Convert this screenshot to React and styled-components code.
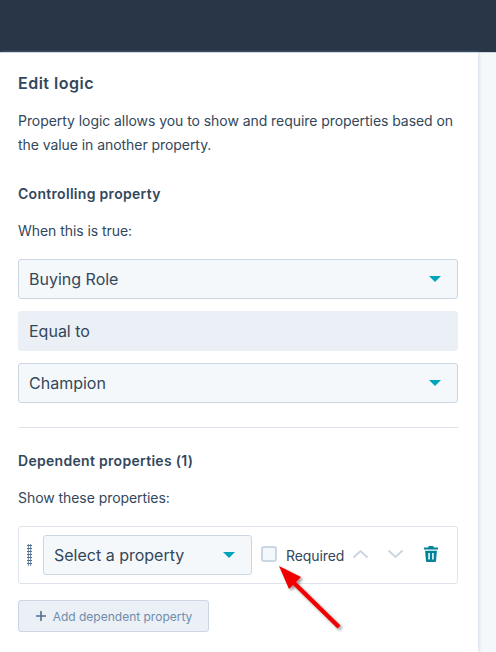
import React from "react";
import styled, { createGlobalStyle } from "styled-components";

const Global = createGlobalStyle`
  html, body { margin: 0; padding: 0; height: 652px; overflow: hidden; background: #f5f8fa; }
  body { font-family: "Inter", "Noto Sans", sans-serif; color: #33475b; }
`;
const Page = styled.div`
  height: 652px; display: flex; flex-direction: column; position: relative; overflow: hidden;
`;
const TopBar = styled.header`
  height: 53px; flex: none; background: #283647; border-bottom: 1px solid #cbd6e2; box-sizing: border-box;
`;
const Panel = styled.main`
  width: 478px; flex: 1; box-sizing: border-box; background: #fff; padding: 21px 20px 0 18px;
  box-shadow: 1px 0 3px rgba(203, 214, 226, .8);
`;
const Title = styled.h2`
  margin: 0; font-size: 16px; line-height: 18px; font-weight: 600; color: #33475b; letter-spacing: .5px;
`;
const Text = styled.p`
  margin: ${p => p.$mt}px 0 0; font-size: 14px; line-height: 24px; font-weight: 400; color: #33475b; letter-spacing: -.06px;
`;
const SectionTitle = styled.h3`
  margin: ${p => p.$mt}px 0 0; font-size: 14px; line-height: 18px; font-weight: 600; color: #33475b; letter-spacing: .3px;
`;
const Fields = styled.div`
  display: flex; flex-direction: column; gap: 12px; margin-top: 16px;
`;
const Select = styled.div`
  height: 40px; box-sizing: border-box; display: flex; align-items: center; justify-content: space-between;
  padding: 0 16px 0 10px; border: 1px solid #cbd6e2; border-radius: 3px; background: #f5f8fa;
  font-size: 16px; color: #33475b; flex: ${p => p.$fixed ? "none" : "initial"}; width: ${p => p.$width || "auto"};
`;
const ReadOnly = styled.div`
  height: 40px; box-sizing: border-box; display: flex; align-items: center; padding: 0 11px;
  border-radius: 3px; background: #eaf0f6; font-size: 16px; color: #33475b;
`;
const Caret = styled.span`
  width: 0; height: 0; border-left: 6px solid transparent; border-right: 6px solid transparent;
  border-top: 6px solid #00a4bd;
`;
const Divider = styled.hr`
  margin: 24px 0 0; border: 0; border-top: 1px solid #dfe3eb;
`;
const Card = styled.div`
  margin-top: 16px; height: 58px; box-sizing: border-box; border: 1px solid #dfe3eb; border-radius: 3px;
  display: flex; align-items: center; padding: 0 19px 0 8px;
`;
const Grip = styled.span`
  width: 5px; height: 22px; margin-right: 11px; flex: none;
  background-image: radial-gradient(circle, #516f90 0 1px, transparent 1.1px);
  background-size: 2.5px 3px;
`;
const Check = styled.span`
  width: 12px; height: 12px; flex: none; margin: -2px 0 0 9px; border: 2px solid #cbd6e2; border-radius: 3px; background: #f5f8fa;
`;
const CheckLabel = styled.span`
  margin-left: 9px; font-size: 14px; color: #33475b; letter-spacing: -.1px;
`;
const Icons = styled.div`
  display: flex; align-items: center; margin-left: auto;
`;
const IconBox = styled.svg`
  display: block; width: ${p => p.$w}px; height: ${p => p.$h}px; margin-left: ${p => p.$ml}px; margin-top: -2px;
`;
const AddButton = styled.button`
  margin-top: 16px; width: 191px; height: 32px; box-sizing: border-box; display: flex; align-items: center; justify-content: center; gap: 6px;
  padding: 0; border: 1px solid #cbd6e2; border-radius: 3px; background: #eaf0f6; color: #6f8cab;
  font-family: inherit; font-size: 12px;
`;
const PlusIcon = styled.svg`
  width: 12px; height: 12px; flex: none;
`;
const Arrow = styled.svg`
  position: absolute; left: 270px; top: 560px; width: 80px; height: 75px; overflow: visible;
`;

const Dropdown = ({ label, width }) => (
  <Select $width={width} $fixed={!!width}>
    {label}
    <Caret />
  </Select>
);

export default function App() {
  return (
    <Page>
      <Global />
      <TopBar />
      <Panel>
        <Title>Edit logic</Title>
        <Text $mt={17}>
          Property logic allows you to show and require properties based on the value in another property.
        </Text>
        <SectionTitle $mt={28}>Controlling property</SectionTitle>
        <Text $mt={16}>When this is true:</Text>
        <Fields>
          <Dropdown label="Buying Role" />
          <ReadOnly>Equal to</ReadOnly>
          <Dropdown label="Champion" />
        </Fields>
        <Divider />
        <SectionTitle $mt={24}>Dependent properties (1)</SectionTitle>
        <Text $mt={16}>Show these properties:</Text>
        <Card>
          <Grip />
          <Dropdown label="Select a property" width="209px" />
          <Check />
          <CheckLabel>Required</CheckLabel>
          <Icons>
            <IconBox $w={17} $h={10} $ml={0} viewBox="0 0 17 10">
              <path d="M1.5 8.5 8.5 2l7 6.5" fill="none" stroke="#cbd6e2" strokeWidth="2" />
            </IconBox>
            <IconBox $w={17} $h={10} $ml={18} viewBox="0 0 17 10">
              <path d="M1.5 1.5 8.5 8l7-6.5" fill="none" stroke="#cbd6e2" strokeWidth="2" />
            </IconBox>
            <IconBox $w={14} $h={16} $ml={20} viewBox="0 0 13 16" preserveAspectRatio="none">
              <path d="M4.5 0h4l.7 1.5H13V3.6H0V1.5h3.8z M1 4.8h11l-.8 10a1.2 1.2 0 0 1-1.2 1.2H3a1.2 1.2 0 0 1-1.2-1.2z" fill="#00829b" />
              <path d="M4.7 7v6.5M8.3 7v6.5" stroke="#fff" strokeWidth="1.4" />
            </IconBox>
          </Icons>
        </Card>
        <AddButton>
          <PlusIcon viewBox="0 0 12 12">
            <path d="M6 1v10M1 6h10" stroke="#516f90" strokeWidth="1.6" />
          </PlusIcon>
          Add dependent property
        </AddButton>
      </Panel>
      <Arrow viewBox="0 0 80 75">
        <defs>
          <filter id="arrowShadow" x="-20%" y="-20%" width="150%" height="150%">
            <feDropShadow dx="2" dy="2" stdDeviation="1.5" floodColor="#000" floodOpacity=".4" />
          </filter>
        </defs>
        <path d="M9 6 L31 17 L26 22 L70.5 65.5 L67.5 68.5 L23 25 L19 29 Z" fill="#f00000" filter="url(#arrowShadow)" />
      </Arrow>
    </Page>
  );
}
